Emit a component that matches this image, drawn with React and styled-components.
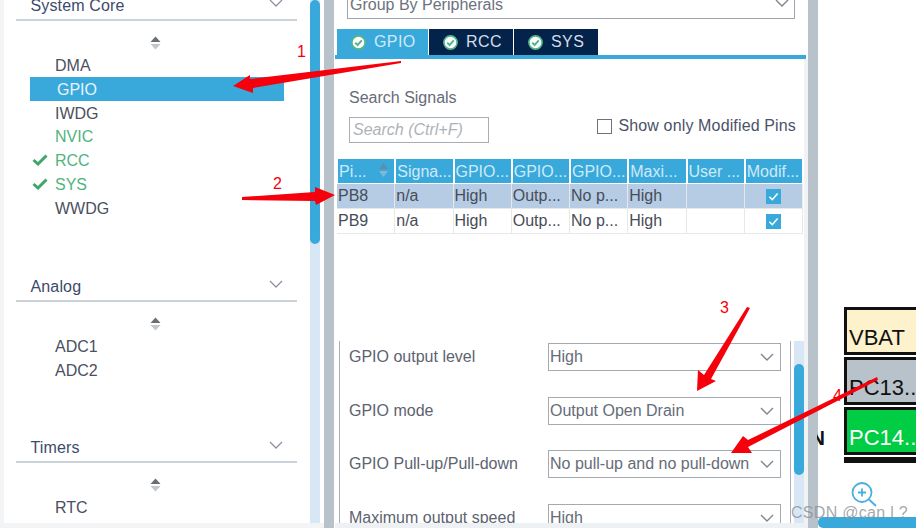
import React from 'react'
import styled, { createGlobalStyle } from 'styled-components'

const Global = createGlobalStyle`
  html, body { margin: 0; padding: 0; background: #fff; }
  body { font-family: "Liberation Sans", Arial, sans-serif; color: #414a5e; }
`

const Page = styled.div`
  position: relative;
  width: 916px;
  height: 528px;
  overflow: hidden;
  display: grid;
  grid-template-columns: 324px 10px 474px 10px 98px;
  background: #fff;
`

const Sidebar = styled.div`
  display: grid;
  grid-template-columns: 306px 10px;
  box-sizing: border-box;
  height: 528px;
  padding-right: 4px;
  border-left: 4px solid #f2f4f6;
  border-bottom: 5px solid #f2f4f6;
`

const SideList = styled.div`
  padding: 0 13px 0 12px;
`

const Group = styled.div`
  height: ${p => p.$height}px;
`

const GroupHead = styled.div`
  display: flex;
  justify-content: space-between;
  align-items: flex-end;
  height: 21px;
  box-sizing: border-box;
  padding: 0 14px 4px 14.5px;
  border-bottom: 2px solid #cbd3da;
  font-size: 16px;
  line-height: 18px;
  letter-spacing: 0.15px;
  color: #3c4a6b;
`

const HeadChevron = styled.svg`
  width: 14px;
  height: 8px;
  margin-bottom: 8px;
  fill: none;
  stroke: #8b939c;
  stroke-width: 1.3;
`

const SortIcon = styled.svg`
  display: block;
  width: 11px;
  height: 14px;
  margin: 15px 0 0 134px;
`

const ItemList = styled.div`
  margin: 3px 0 0 14px;
  width: 254px;
`

const Item = styled.div`
  position: relative;
  height: 23.75px;
  line-height: 25.75px;
  font-size: 16px;
  padding-left: ${p => (p.$active ? 27 : 25)}px;
  color: ${p => (p.$active ? '#e8f4fb' : p.$green ? '#4fb47c' : '#4b4f5e')};
  background: ${p => (p.$active ? '#39a9dc' : 'transparent')};
`

const Tick = styled.svg`
  position: absolute;
  left: 2px;
  top: 6px;
  width: 16px;
  height: 12px;
  fill: none;
  stroke: #3fa66c;
  stroke-width: 3;
`

const ScrollTrack = styled.div`
  background: #d7e7f5;
  height: 100%;
`

const ScrollThumb = styled.div`
  background: #39a9dc;
  height: ${p => p.$h}px;
  margin-top: ${p => p.$top || 0}px;
  border-radius: 5px;
`

const Divider = styled.div`
  background: #b8c2ca;
`

const Main = styled.div`
  display: flex;
  flex-direction: column;
  height: 528px;
  padding-left: 1px;
  box-sizing: border-box;
`

const TopSelect = styled.div`
  display: flex;
  align-items: flex-end;
  justify-content: space-between;
  flex: none;
  height: 19px;
  box-sizing: border-box;
  margin: 0 13px 0 12px;
  padding: 0 5px 4px 2px;
  border: 1px solid #9ea6ad;
  border-top: 0;
  font-size: 16px;
  line-height: 18px;
  color: #6c7280;
`

const Tabs = styled.div`
  display: flex;
  flex: none;
  gap: 1px;
  margin: 10px 2px 0 0;
  padding-left: 2px;
  border-bottom: 4px solid #39a9dc;
  height: 26px;
`

const Tab = styled.div`
  display: flex;
  align-items: center;
  gap: 8px;
  box-sizing: border-box;
  width: ${p => p.$w}px;
  padding-left: 14px;
  font-size: 16px;
  letter-spacing: 0.4px;
  color: ${p => (p.$active ? '#cfe9f7' : '#d5dde6')};
  background: ${p => (p.$active ? '#39a9dc' : '#03234b')};
`

const TabCheck = styled.svg`
  width: 15px;
  height: 15px;
  flex: none;
`

const Body = styled.div`
  flex: 1;
  min-height: 0;
  display: flex;
  flex-direction: column;
  border-right: 4px solid #f0f2f4;
  border-bottom: 5px solid #eef1f4;
`

const SearchBlock = styled.div`
  display: flex;
  justify-content: space-between;
  align-items: flex-end;
  padding: 0 8px 0 14px;
  margin-top: 29px;
`

const SearchLabel = styled.div`
  font-size: 16px;
  line-height: 20px;
  color: #666c78;
  margin-bottom: 9px;
`

const SearchInput = styled.div`
  box-sizing: border-box;
  width: 140px;
  height: 26px;
  border: 1px solid #a6adb3;
  padding-left: 3px;
  font-size: 16px;
  line-height: 24px;
  font-style: italic;
  color: #aeb2b8;
`

const ModifiedOnly = styled.label`
  display: flex;
  align-items: center;
  gap: 6px;
  font-size: 16px;
  line-height: 20px;
  letter-spacing: 0.14px;
  color: #4b5268;
  margin-bottom: 7px;
`

const EmptyBox = styled.span`
  display: block;
  box-sizing: border-box;
  width: 15px;
  height: 15px;
  border: 1px solid #6f7378;
`

const Table = styled.div`
  display: grid;
  grid-template-columns: repeat(8, 58.25px);
  margin: 16px 0 0 2px;
`

const HeadCell = styled.div`
  position: relative;
  height: 24px;
  line-height: 26px;
  margin: 0 1px 1px 1px;
  padding-left: 1px;
  font-size: 16px;
  white-space: nowrap;
  overflow: hidden;
  color: #cdeaf8;
  background: #39a9dc;
`

const HeadSort = styled.svg`
  position: absolute;
  right: 6px;
  top: 4px;
  width: 9px;
  height: 14px;
`

const Cell = styled.div`
  height: 25px;
  line-height: 23px;
  box-sizing: border-box;
  padding-left: 1px;
  font-size: 16px;
  white-space: nowrap;
  overflow: hidden;
  color: #474c58;
  border-right: 1px solid #e6e8ea;
  border-bottom: 1px solid #e6e8ea;
  background: ${p => (p.$selected ? '#b5cce4' : '#fff')};
  display: ${p => (p.$center ? 'flex' : 'block')};
  align-items: center;
  justify-content: center;
`

const CheckBox = styled.svg`
  width: 15px;
  height: 15px;
`

const Config = styled.div`
  flex: 1;
  display: grid;
  grid-template-columns: 1fr 10px;
  gap: 3px;
  margin: 107px 0 0 4px;
  min-height: 0;
  overflow: hidden;
`

const Fields = styled.div`
  border-left: 1px solid #a9afb4;
  border-right: 1px solid #a9afb4;
  padding: 2px 9px 0 9px;
`

const Field = styled.div`
  display: grid;
  grid-template-columns: 199px 233px;
  align-items: center;
  height: 27px;
  margin-bottom: 26.7px;
  font-size: 16px;
  color: #5d6370;
`

const FieldSelect = styled.div`
  display: flex;
  align-items: center;
  justify-content: space-between;
  box-sizing: border-box;
  height: 28px;
  padding: 0 6px 0 1px;
  border: 1px solid #a3aab0;
  color: #666c78;
`

const Chevron = styled.svg`
  width: 14px;
  height: 8px;
  flex: none;
  margin-bottom: ${p => p.$lift || 0}px;
  fill: none;
  stroke: #7d858d;
  stroke-width: 1.4;
`

const Canvas = styled.div`
  display: flex;
  flex-direction: column;
  align-items: flex-start;
  padding: 307px 0 0 26px;
`

const Pins = styled.div`
  position: relative;
  width: 72px;
`

const Pin = styled.div`
  display: flex;
  align-items: flex-end;
  box-sizing: border-box;
  width: 90px;
  height: ${p => p.$h || 48}px;
  margin-bottom: 2px;
  padding-left: 2px;
  overflow: hidden;
  border: 3px solid #111;
  font-size: 22px;
  line-height: 28px;
  color: ${p => p.$fg || '#111'};
  background: ${p => p.$bg};
`

const PinLabel = styled.div`
  position: absolute;
  left: -27px;
  top: 119px;
  width: 8px;
  overflow: hidden;
  font-size: 20px;
  font-weight: 700;
  line-height: 24px;
  color: #111;
  direction: rtl;
`

const ZoomIcon = styled.svg`
  display: block;
  width: 26px;
  height: 26px;
  margin: 17px 0 0 7px;
  fill: none;
  stroke: #49aee0;
  stroke-width: 1.8;
`

const HScroll = styled.div`
  position: absolute;
  left: 818px;
  right: 0;
  bottom: 0;
  height: 11px;
  background: #39a9dc;
  border-radius: 5px 0 0 5px;
`

const Overlay = styled.svg`
  position: absolute;
  left: 0;
  top: 0;
  width: 916px;
  height: 528px;
  pointer-events: none;
`

const Note = styled.span`
  position: absolute;
  left: ${p => p.$x}px;
  top: ${p => p.$y}px;
  font-size: 16px;
  line-height: 18px;
  color: #f5000b;
`

const Watermark = styled.span`
  position: absolute;
  left: 791px;
  top: 503px;
  font-size: 16px;
  line-height: 20px;
  letter-spacing: 0.3px;
  white-space: nowrap;
  color: rgba(140, 146, 150, 0.8);
`

const Sort = () => (
  <SortIcon viewBox="0 0 12 14">
    <path d="M6 0 L11.5 6 H0.5 Z" fill="#6a6f74" />
    <path d="M6 14 L11.5 8 H0.5 Z" fill="#c3c7ca" />
  </SortIcon>
)

const Down = () => (
  <HeadChevron viewBox="0 0 14 8">
    <path d="M1 1 L7 7 L13 1" />
  </HeadChevron>
)

const SelectArrow = ({ lift }) => (
  <Chevron $lift={lift} viewBox="0 0 14 8">
    <path d="M1 1 L7 7 L13 1" />
  </Chevron>
)

const TabTick = () => (
  <TabCheck viewBox="0 0 15 15">
    <circle cx="7.5" cy="7.5" r="6.6" fill="#fff" stroke="#52b788" strokeWidth="1.6" />
    <path d="M4.2 7.6 L6.6 10 L10.8 5.4" fill="none" stroke="#52b788" strokeWidth="2" />
  </TabCheck>
)

const BlueCheck = () => (
  <CheckBox viewBox="0 0 15 15">
    <rect width="15" height="15" fill="#39a9dc" />
    <path d="M3.4 7.8 L6.3 10.7 L11.6 4.6" fill="none" stroke="#fff" strokeWidth="1.6" />
  </CheckBox>
)

const core = [
  { name: 'DMA' },
  { name: 'GPIO', active: true },
  { name: 'IWDG' },
  { name: 'NVIC', green: true },
  { name: 'RCC', green: true, tick: true },
  { name: 'SYS', green: true, tick: true },
  { name: 'WWDG' },
]

const columns = ['Pi...', 'Signa...', 'GPIO...', 'GPIO...', 'GPIO...', 'Maxi...', 'User ...', 'Modif...']
const rows = [
  { cells: ['PB8', 'n/a', 'High', 'Outp...', 'No p...', 'High', ''], selected: true },
  { cells: ['PB9', 'n/a', 'High', 'Outp...', 'No p...', 'High', ''] },
]
const fields = [
  ['GPIO output level', 'High'],
  ['GPIO mode', 'Output Open Drain'],
  ['GPIO Pull-up/Pull-down', 'No pull-up and no pull-down'],
  ['Maximum output speed', 'High'],
]

export default function App() {
  return (
    <Page>
      <Global />
      <Sidebar>
        <SideList>
          <Group $height={281}>
            <GroupHead>
              System Core
              <Down />
            </GroupHead>
            <Sort />
            <ItemList>
              {core.map(item => (
                <Item key={item.name} $active={item.active} $green={item.green}>
                  {item.tick && (
                    <Tick viewBox="0 0 16 12">
                      <path d="M1.5 6 L6 10 L14.5 1.5" />
                    </Tick>
                  )}
                  {item.name}
                </Item>
              ))}
            </ItemList>
          </Group>
          <Group $height={161}>
            <GroupHead>
              Analog
              <Down />
            </GroupHead>
            <Sort />
            <ItemList>
              <Item>ADC1</Item>
              <Item>ADC2</Item>
            </ItemList>
          </Group>
          <Group $height={80}>
            <GroupHead>
              Timers
              <Down />
            </GroupHead>
            <Sort />
            <ItemList>
              <Item>RTC</Item>
            </ItemList>
          </Group>
        </SideList>
        <ScrollTrack>
          <ScrollThumb $h={244} />
        </ScrollTrack>
      </Sidebar>
      <Divider />
      <Main>
        <TopSelect>
          Group By Peripherals
          <SelectArrow lift={7} />
        </TopSelect>
        <Tabs>
          <Tab $active $w={91}>
            <TabTick />
            GPIO
          </Tab>
          <Tab $w={84}>
            <TabTick />
            RCC
          </Tab>
          <Tab $w={84}>
            <TabTick />
            SYS
          </Tab>
        </Tabs>
        <Body>
          <SearchBlock>
            <div>
              <SearchLabel>Search Signals</SearchLabel>
              <SearchInput>Search (Ctrl+F)</SearchInput>
            </div>
            <ModifiedOnly>
              <EmptyBox />
              Show only Modified Pins
            </ModifiedOnly>
          </SearchBlock>
          <Table>
            {columns.map((c, i) => (
              <HeadCell key={i}>
                {c}
                {i === 0 && (
                  <HeadSort viewBox="0 0 9 14">
                    <path d="M4.5 0 L9 6 H0 Z" fill="#5f8fa8" />
                    <path d="M4.5 14 L9 8 H0 Z" fill="#7db9d6" />
                  </HeadSort>
                )}
              </HeadCell>
            ))}
            {rows.map((r, ri) => (
              <React.Fragment key={ri}>
                {r.cells.map((c, i) => (
                  <Cell key={i} $selected={r.selected}>
                    {c}
                  </Cell>
                ))}
                <Cell $selected={r.selected} $center>
                  <BlueCheck />
                </Cell>
              </React.Fragment>
            ))}
          </Table>
          <Config>
            <Fields>
              {fields.map(([label, value]) => (
                <Field key={label}>
                  {label}
                  <FieldSelect>
                    {value}
                    <SelectArrow />
                  </FieldSelect>
                </Field>
              ))}
            </Fields>
            <ScrollTrack>
              <ScrollThumb $top={23} $h={111} />
            </ScrollTrack>
          </Config>
        </Body>
      </Main>
      <Divider />
      <Canvas>
        <Pins>
          <PinLabel>N</PinLabel>
          <Pin $bg="#fdf2cc">VBAT</Pin>
          <Pin $bg="#b8c2ca">PC13...</Pin>
          <Pin $bg="#00cc44" $fg="#fff">PC14...</Pin>
          <Pin $bg="#00cc44" $h={5} />
        </Pins>
        <ZoomIcon viewBox="0 0 26 26">
          <circle cx="11" cy="10.5" r="9.5" />
          <path d="M18 17.5 L25 24 M11 6.5 V14.5 M7 10.5 H15" />
        </ZoomIcon>
      </Canvas>
      <HScroll />
      <Note $x={297} $y={43}>1</Note>
      <Note $x={273} $y={175}>2</Note>
      <Note $x={720} $y={299}>3</Note>
      <Note $x={833} $y={387}>4</Note>
      <Overlay viewBox="0 0 916 528">
        <g fill="#f5000b">
          <polygon points="401,61 250,79 250,75 233,86 253,93 253,88 401,63" />
          <polygon points="242,197 315,192 315,187 335,195 316,205 315,201 242,200" />
          <polygon points="747,307 704,375 698,370 697,391 716,381 711,379 750,308" />
          <polygon points="877,377 748,440 743,436 731,453 752,453 748,447 878,380" />
        </g>
      </Overlay>
      <Watermark>CSDN @can l ?</Watermark>
    </Page>
  )
}
